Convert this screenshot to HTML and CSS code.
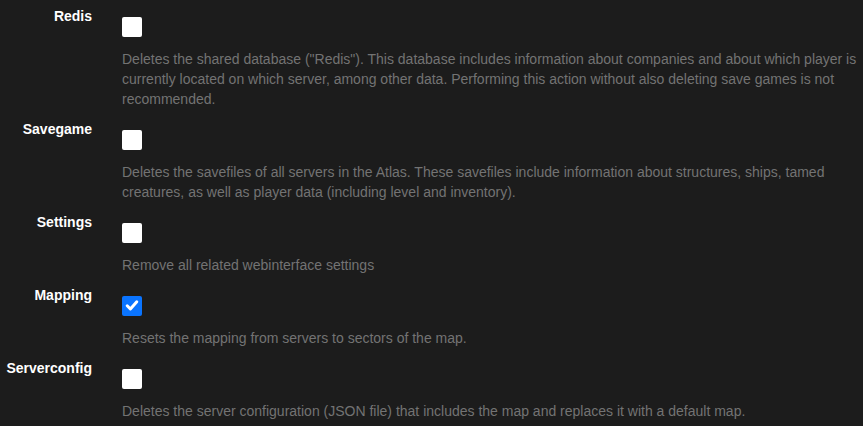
FILE: index.html
```html
<!DOCTYPE html>
<html lang="en">
<head>
  <meta charset="UTF-8" />
  <meta name="viewport" content="width=device-width, initial-scale=1.0" />
  <title>Reset</title>
  <link rel="stylesheet" href="styles.css">
</head>
<body>

  <form class="reset-form">
    <div class="form-row">
      <label class="form-label" for="resetRedis">Redis</label>
      <div class="form-field">
        <label class="check">
          <input type="checkbox" id="resetRedis">
          <svg viewBox="0 0 20 20"><path d="M5.2 9.8 L8.4 13 L14.8 5.8" /></svg>
        </label>
        <p class="help">Deletes the shared database ("Redis"). This database includes information about companies and about which player is currently located on which server, among other data. Performing this action without also deleting save games is not recommended.</p>
      </div>
    </div>

    <div class="form-row">
      <label class="form-label" for="resetSavegame">Savegame</label>
      <div class="form-field">
        <label class="check">
          <input type="checkbox" id="resetSavegame">
          <svg viewBox="0 0 20 20"><path d="M5.2 9.8 L8.4 13 L14.8 5.8" /></svg>
        </label>
        <p class="help">Deletes the savefiles of all servers in the Atlas. These savefiles include information about structures, ships, tamed creatures, as well as player data (including level and inventory).</p>
      </div>
    </div>

    <div class="form-row">
      <label class="form-label" for="resetSettings">Settings</label>
      <div class="form-field">
        <label class="check">
          <input type="checkbox" id="resetSettings">
          <svg viewBox="0 0 20 20"><path d="M5.2 9.8 L8.4 13 L14.8 5.8" /></svg>
        </label>
        <p class="help">Remove all related webinterface settings</p>
      </div>
    </div>

    <div class="form-row">
      <label class="form-label" for="resetMapping">Mapping</label>
      <div class="form-field">
        <label class="check">
          <input type="checkbox" id="resetMapping" checked>
          <svg viewBox="0 0 20 20"><path d="M5.2 9.8 L8.4 13 L14.8 5.8" /></svg>
        </label>
        <p class="help">Resets the mapping from servers to sectors of the map.</p>
      </div>
    </div>

    <div class="form-row">
      <label class="form-label" for="resetServerconfig">Serverconfig</label>
      <div class="form-field">
        <label class="check">
          <input type="checkbox" id="resetServerconfig">
          <svg viewBox="0 0 20 20"><path d="M5.2 9.8 L8.4 13 L14.8 5.8" /></svg>
        </label>
        <p class="help">Deletes the server configuration (JSON file) that includes the map and replaces it with a default map.</p>
      </div>
    </div>
  </form>

</body>
</html>
```

FILE: styles.css
```css
* {
  box-sizing: border-box;
}

body {
  margin: 0;
  padding: 0;
  font-family: "Liberation Sans", Arial, sans-serif;
  font-size: 14px;
  line-height: 20px;
  background: #1c1c1c;
  color: #fff;
}

.reset-form {
  padding-top: 6px;
}

.form-row {
  display: grid;
  grid-template-columns: 107px 1fr;
  margin-bottom: 10px;
}

.form-label {
  padding-right: 15px;
  text-align: right;
  font-weight: bold;
  color: #fff;
}

.form-field {
  padding-left: 15px;
  padding-right: 6px;
  padding-top: 11px;
}

.check {
  display: block;
  position: relative;
  width: 20px;
  height: 20px;
  border-radius: 2px;
  background: #fff;
  cursor: pointer;
}

.check input {
  position: absolute;
  opacity: 0;
  margin: 0;
  width: 100%;
  height: 100%;
  cursor: pointer;
}

.check svg {
  display: none;
  width: 20px;
  height: 20px;
}

.check svg path {
  fill: none;
  stroke: #fff;
  stroke-width: 3;
  stroke-linecap: round;
  stroke-linejoin: round;
}

.check:has(input:checked) {
  background: #0a74ff;
}

.check input:checked + svg {
  display: block;
}

.help {
  margin: 12px 0 0;
  color: #737373;
}
```
